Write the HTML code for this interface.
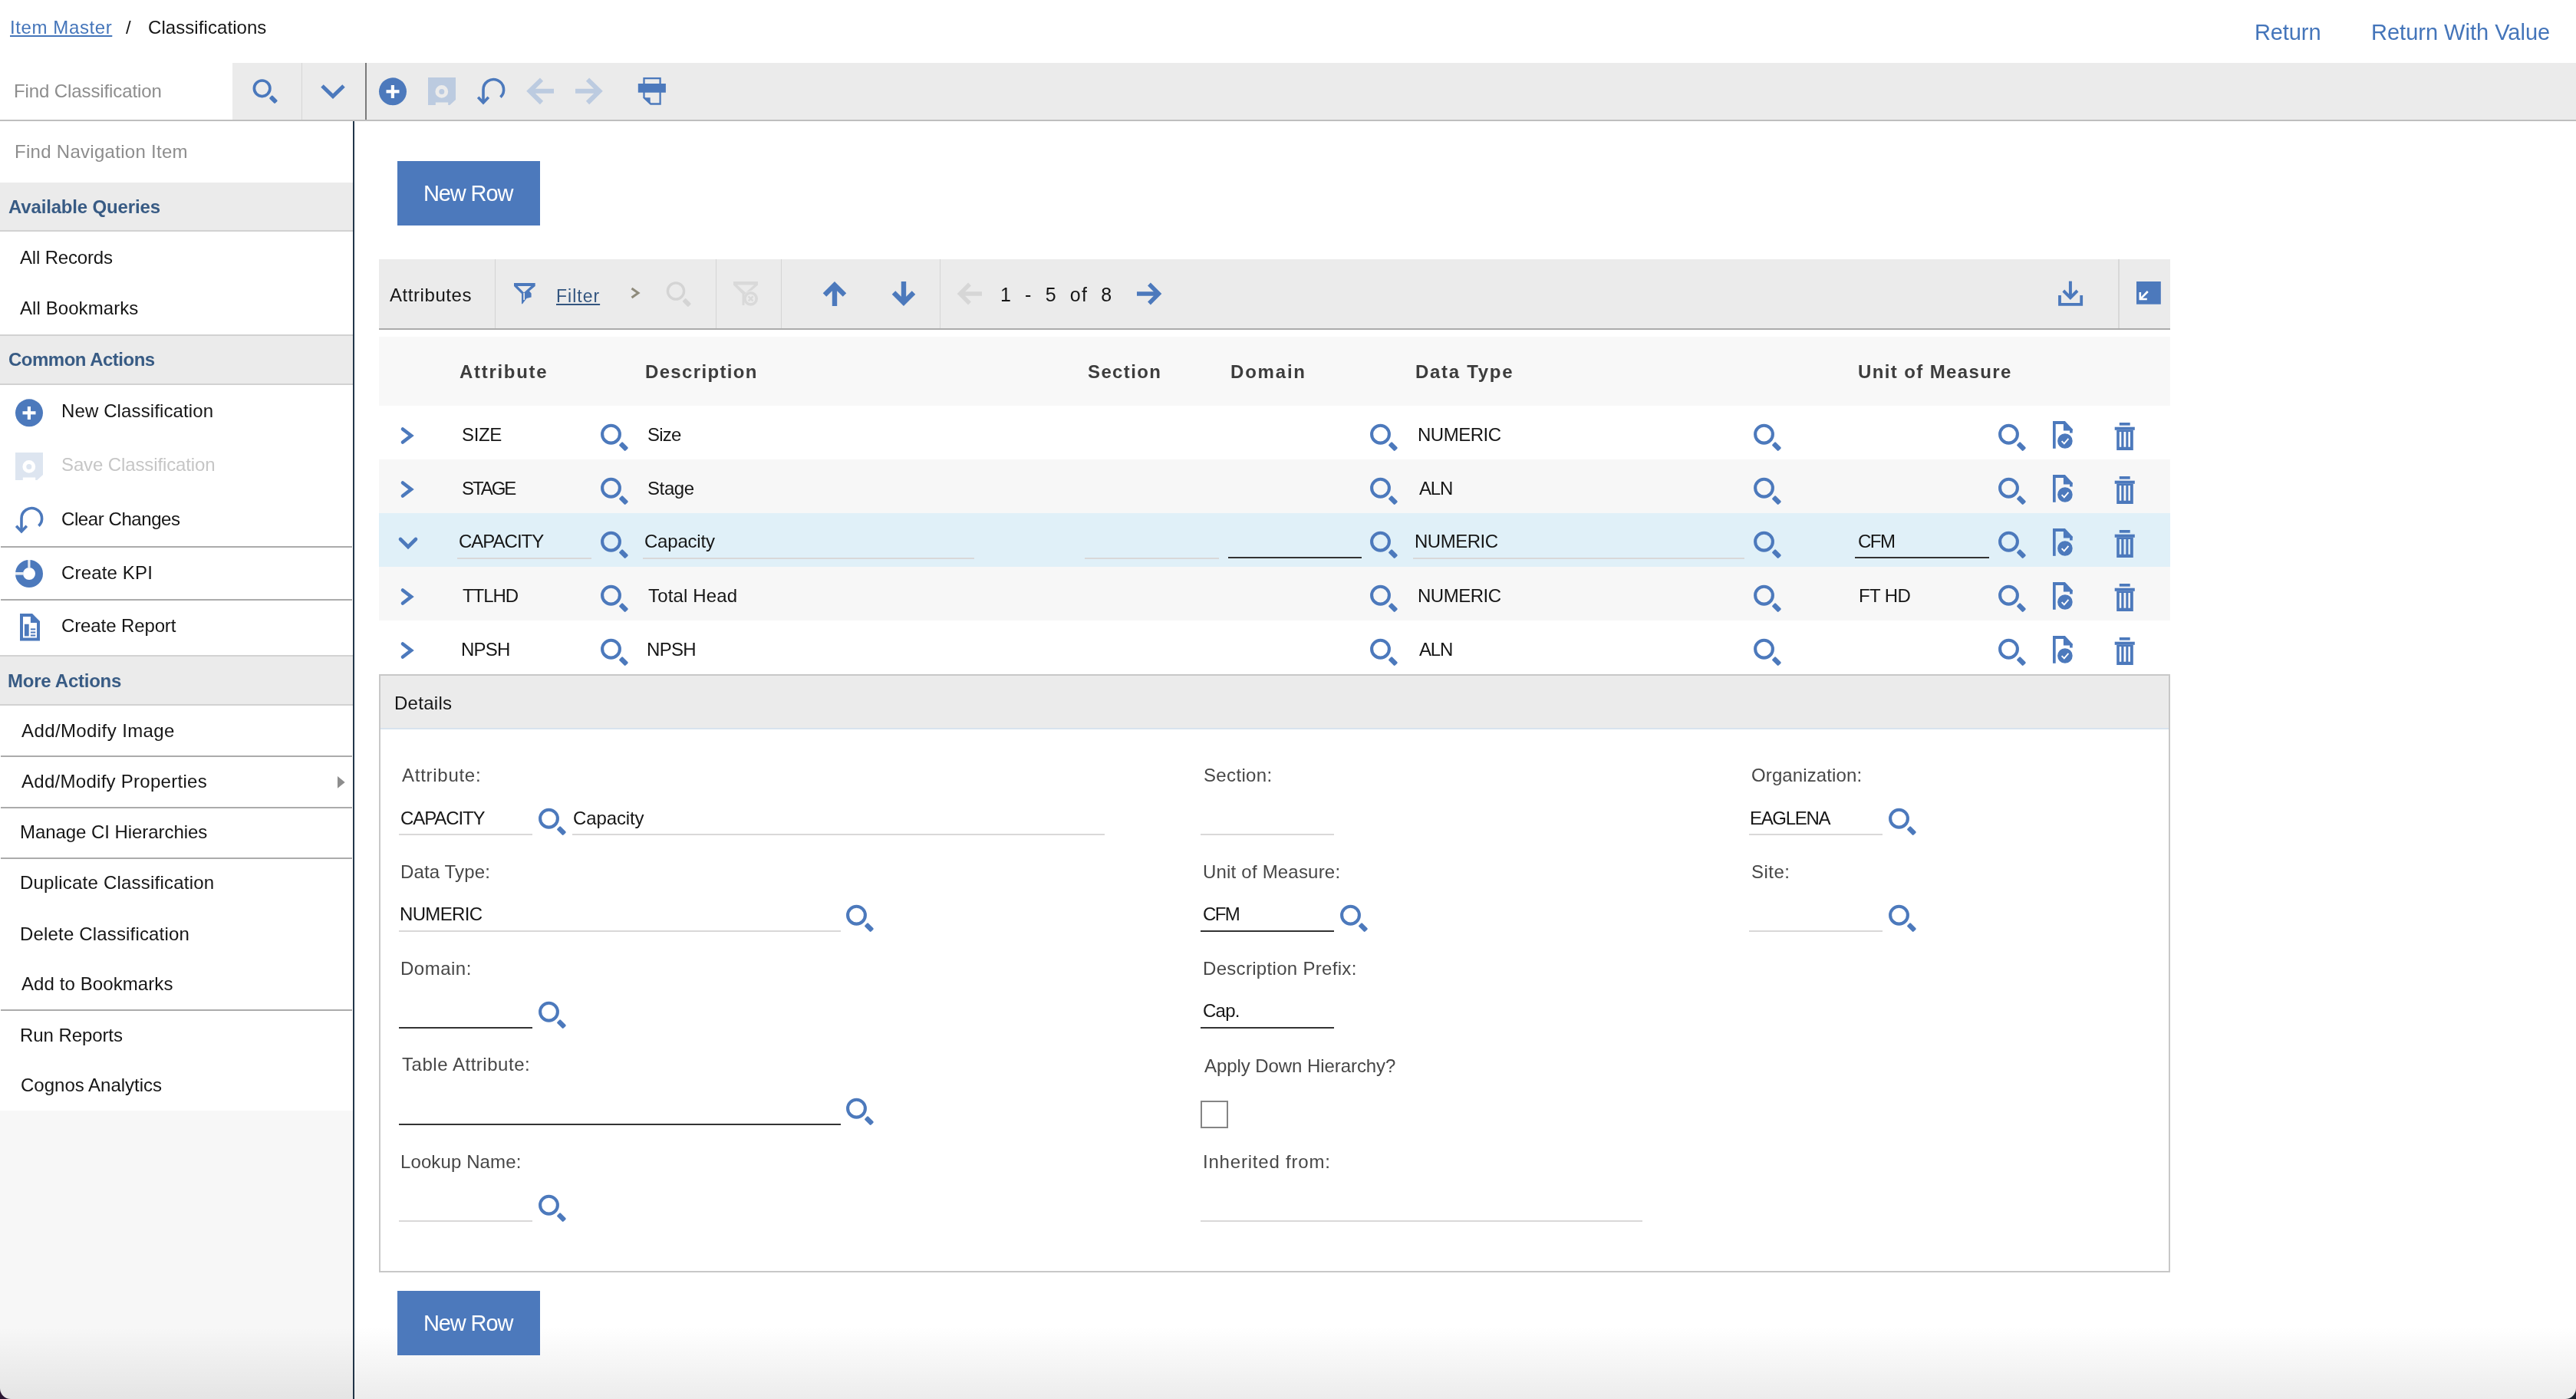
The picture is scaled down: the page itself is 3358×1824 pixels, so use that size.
<!DOCTYPE html>
<html><head><meta charset="utf-8"><title>Classifications</title>
<style>
html,body{margin:0;padding:0;width:3358px;height:1824px;overflow:hidden;background:#fff;}
body{position:relative;font-family:"Liberation Sans",sans-serif;}
.r{position:absolute;box-sizing:content-box;}
.i{position:absolute;overflow:visible;}
.t{position:absolute;line-height:40px;white-space:nowrap;font-family:"Liberation Sans",sans-serif;will-change:transform;}
</style></head><body>
<svg width="0" height="0" style="position:absolute">
<defs>
<g id="mag"><circle cx="13.5" cy="14.2" r="11.4" fill="none" stroke="currentColor" stroke-width="4.1"/><rect x="24.15" y="27" width="11.5" height="6.4" rx="1.3" fill="currentColor" transform="rotate(45 29.9 30.2)"/></g>
<g id="magd"><circle cx="13" cy="13.5" r="10.6" fill="none" stroke="currentColor" stroke-width="3.4"/><rect x="22" y="25.5" width="10.5" height="6" rx="1.2" fill="currentColor" transform="rotate(45 27.25 28.5)"/></g>
<g id="plusc"><circle cx="18" cy="18.3" r="18" fill="currentColor"/><rect x="9.5" y="16.2" width="17" height="4.2" fill="#fff"/><rect x="15.8" y="10" width="4.2" height="17" fill="#fff"/></g>
<g id="save"><path fill="currentColor" fill-rule="evenodd" d="M0 0 H36 V29 L28.3 36 H26.2 V32.5 H9.8 V36 H0 Z M26.2 18.4 A8.4 8.4 0 1 0 9.4 18.4 A8.4 8.4 0 1 0 26.2 18.4 Z M21.3 18.4 A3.5 3.5 0 1 1 14.3 18.4 A3.5 3.5 0 1 1 21.3 18.4 Z"/></g>
<g id="undo"><path d="M32.4 26.6 A13.3 13.3 0 1 0 10 17 V32" fill="none" stroke="currentColor" stroke-width="3.6"/><polyline points="3.2,26.8 10,34 16.8,26.8" fill="none" stroke="currentColor" stroke-width="3.6" stroke-linejoin="miter"/></g>
<g id="undo2"><path d="M32.4 25.6 A13.3 13.3 0 1 0 10 16 V31" fill="none" stroke="currentColor" stroke-width="3.6"/><polyline points="3.2,25.8 10,33 16.8,25.8" fill="none" stroke="currentColor" stroke-width="3.6"/></g>
<g id="arrL"><path d="M37 18.8 H6 M21 3.6 L5.5 18.8 L21 34" fill="none" stroke="currentColor" stroke-width="6" stroke-linejoin="miter"/></g>
<g id="arrR"><path d="M1 18.8 H32 M17 3.6 L32.5 18.8 L17 34" fill="none" stroke="currentColor" stroke-width="6" stroke-linejoin="miter"/></g>
<g id="arrS"><path d="M2 18 H30 M18 5.5 L30.5 18 L18 30.5" fill="none" stroke="currentColor" stroke-width="5.4" stroke-linejoin="miter"/></g>
<g id="printer"><rect x="9.5" y="2.1" width="21.1" height="10" fill="none" stroke="currentColor" stroke-width="2.3"/><rect x="1.8" y="9" width="36.1" height="11.7" fill="currentColor"/><path d="M9.5 20 V27.3 L18.4 35.5 H30.6 V20" fill="none" stroke="currentColor" stroke-width="2.3"/><polygon points="8.4,27.3 17.7,27.3 17.7,36.6" fill="currentColor"/></g>
<g id="kpi"><circle cx="18" cy="18" r="13" fill="none" stroke="currentColor" stroke-width="10"/><rect x="16.3" y="0" width="3.2" height="10.5" fill="#e6ebf2"/><rect x="0" y="16" width="10.5" height="3.6" fill="#e6ebf2"/></g>
<g id="report"><path d="M2 2 H15 L24 11 V33.6 H2 Z" fill="none" stroke="currentColor" stroke-width="4"/><polygon points="13.9,0 15.8,0 26,10.2 26,12 13.9,12" fill="currentColor"/><rect x="5.9" y="13.75" width="5.8" height="15.65" fill="currentColor"/><rect x="13.9" y="19.4" width="6.3" height="2" fill="currentColor"/><rect x="13.9" y="23.5" width="6.3" height="2" fill="currentColor"/><rect x="13.9" y="27.5" width="6.3" height="2" fill="currentColor"/></g>
<g id="filter"><path fill="currentColor" fill-rule="evenodd" d="M6 6.9 H33.7 V11 L26 17.6 L28.6 20.6 V25.6 L22.5 27 L17 34.3 H16 V21.1 L6 11 Z M10.6 11 H28.3 L19 19.4 Z M18.3 20 H20 V29 H18.3 Z"/></g>
<g id="filterx"><path fill="currentColor" fill-rule="evenodd" d="M6 4.9 H38 V9.4 L30 16.5 L24 18.5 L20.5 22 V36 H17.5 V21 L6 9.4 Z M11 9.4 H33 L22 19.5 Z"/><circle cx="28.6" cy="27.4" r="7.6" fill="none" stroke="currentColor" stroke-width="3.6"/><path d="M25.6 24.4 L31.6 30.4 M31.6 24.4 L25.6 30.4" stroke="currentColor" stroke-width="2.4"/></g>
<g id="up"><path d="M18 34 V8 M5 19.5 L18 6.6 L31 19.5" fill="none" stroke="currentColor" stroke-width="6.4" stroke-linejoin="miter"/></g>
<g id="down"><path d="M18 2 V28 M5 16.5 L18 29.4 L31 16.5" fill="none" stroke="currentColor" stroke-width="6.4" stroke-linejoin="miter"/></g>
<g id="download"><path d="M18.9 2.6 V23" fill="none" stroke="currentColor" stroke-width="4"/><polyline points="9.8,15 18.9,24.2 28,15" fill="none" stroke="currentColor" stroke-width="4"/><path d="M5 21 V32.8 H33.2 V21" fill="none" stroke="currentColor" stroke-width="3.8"/></g>
<g id="collapse"><rect x="1" y="1" width="31.8" height="29.7" fill="currentColor"/><path d="M15.8 14 L6.3 23.6 M5.8 15 V24 H14.8" fill="none" stroke="#fff" stroke-width="2.6"/></g>
<g id="doccheck"><rect x="2" y="2" width="3.7" height="35.8" fill="currentColor"/><rect x="2" y="2" width="14" height="4" fill="currentColor"/><polygon points="15.9,2 17.9,2 27.7,12.4 27.7,14.4 15.9,14.4" fill="currentColor"/><rect x="24" y="12.5" width="3.7" height="5" fill="currentColor"/><circle cx="17.9" cy="28" r="9.8" fill="currentColor"/><polyline points="13.6,28.2 16.8,31.4 22.4,24.8" fill="none" stroke="#fff" stroke-width="1.9"/></g>
<g id="trash"><rect x="8.8" y="3" width="13.9" height="3.7" fill="currentColor"/><rect x="2.7" y="8.7" width="26.1" height="4.1" fill="currentColor"/><path fill="currentColor" fill-rule="evenodd" d="M5.2 12.8 H26.8 V38.9 H5.2 Z M8.8 15 V34.8 H11.3 V15 Z M14.5 15 V34.8 H17.3 V15 Z M20.4 15 V34.8 H22.9 V15 Z"/></g>
</defs></svg>
<div class=r style="left:303px;top:82px;width:3055px;height:74px;background:#ebebeb;"></div><div class=r style="left:0px;top:156px;width:3358px;height:2px;background:#bebebe;"></div><div class=r style="left:393px;top:82px;width:1px;height:74px;background:#d6d6d6;"></div><div class=r style="left:476px;top:82px;width:2px;height:74px;background:#7a7a7a;"></div><svg class=i style="left:328px;top:101px;width:37px;height:37px;" viewBox="0 0 37 37"><g transform="translate(1.5 1.5) scale(0.9)" style="color:#4a78bc"><use href="#mag"/></g></svg><svg class=i style="left:415px;top:106px;width:38px;height:26px;" viewBox="0 0 38 26"><polyline points="5,6 19,19.5 33,6" fill="none" stroke="#4c79bc" stroke-width="5" stroke-linecap="butt"/></svg><svg class=i style="left:494px;top:100.5px;width:36px;height:36px;color:#4c79bc;" viewBox="0 0 36 36"><use href="#plusc"/></svg><svg class=i style="left:558px;top:100.5px;width:36px;height:36px;color:#bccbe0;" viewBox="0 0 36 36"><use href="#save"/></svg><svg class=i style="left:620px;top:100px;width:40px;height:38px;color:#4c79bc;" viewBox="0 0 40 38"><use href="#undo"/></svg><svg class=i style="left:685px;top:100px;width:38px;height:37px;color:#bccbe0;" viewBox="0 0 38 37"><use href="#arrL"/></svg><svg class=i style="left:749px;top:100px;width:38px;height:37px;color:#bccbe0;" viewBox="0 0 38 37"><use href="#arrR"/></svg><svg class=i style="left:830px;top:100px;width:40px;height:38px;color:#4c79bc;" viewBox="0 0 40 38"><use href="#printer"/></svg><div class=r style="left:460px;top:158px;width:2px;height:1666px;background:#22364a;"></div><div class=r style="left:0px;top:1448px;width:460px;height:376px;background:#f7f7f7;"></div><div class=r style="left:0;top:1730px;width:3358px;height:94px;background:linear-gradient(to bottom, rgba(0,0,0,0), rgba(0,0,0,0.075));"></div><div class=r style="left:0px;top:238px;width:460px;height:62px;background:#ebebeb;"></div><div class=r style="left:0px;top:300px;width:460px;height:2px;background:#d2d2d2;"></div><div class=r style="left:0px;top:438px;width:460px;height:62px;background:#ebebeb;"></div><div class=r style="left:0px;top:500px;width:460px;height:2px;background:#d2d2d2;"></div><div class=r style="left:0px;top:856px;width:460px;height:62px;background:#ebebeb;"></div><div class=r style="left:0px;top:918px;width:460px;height:2px;background:#d2d2d2;"></div><div class=r style="left:0px;top:436px;width:460px;height:2px;background:#d2d2d2;"></div><div class=r style="left:0px;top:854px;width:460px;height:2px;background:#d2d2d2;"></div><div class=r style="left:1px;top:712px;width:458px;height:2px;background:#ababab;"></div><div class=r style="left:1px;top:781px;width:458px;height:2px;background:#ababab;"></div><div class=r style="left:1px;top:985px;width:458px;height:2px;background:#ababab;"></div><div class=r style="left:1px;top:1052px;width:458px;height:2px;background:#ababab;"></div><div class=r style="left:1px;top:1118px;width:458px;height:2px;background:#ababab;"></div><div class=r style="left:1px;top:1316px;width:458px;height:2px;background:#ababab;"></div><svg class=i style="left:20px;top:519.5px;width:36px;height:36px;color:#4c79bc;" viewBox="0 0 36 36"><use href="#plusc"/></svg><svg class=i style="left:20px;top:589.5px;width:36px;height:36px;color:#dde5f0;" viewBox="0 0 36 36"><use href="#save"/></svg><svg class=i style="left:18px;top:660px;width:40px;height:36px;color:#4c79bc;" viewBox="0 0 40 36"><use href="#undo2"/></svg><svg class=i style="left:20px;top:730px;width:36px;height:36px;color:#4c79bc;" viewBox="0 0 36 36"><use href="#kpi"/></svg><svg class=i style="left:26px;top:800px;width:26px;height:36px;color:#4c79bc;" viewBox="0 0 26 36"><use href="#report"/></svg><svg class=i style="left:440px;top:1012px;width:10px;height:16px;" viewBox="0 0 10 16"><polygon points="0,0 9.6,7.9 0,15.7" fill="#8d8d8d"/></svg><div class=r style="left:518px;top:210px;width:186px;height:84px;background:#4c79bc;"></div><div class=r style="left:518px;top:1683px;width:186px;height:84px;background:#4c79bc;"></div><div class=r style="left:494px;top:338px;width:2335px;height:90px;background:#ebebeb;"></div><div class=r style="left:494px;top:428px;width:2335px;height:2px;background:#ababab;"></div><div class=r style="left:645px;top:338px;width:1px;height:90px;background:#d4d4d4;"></div><div class=r style="left:933px;top:338px;width:1px;height:90px;background:#d4d4d4;"></div><div class=r style="left:1018px;top:338px;width:1px;height:90px;background:#d4d4d4;"></div><div class=r style="left:1225px;top:338px;width:1px;height:90px;background:#d4d4d4;"></div><div class=r style="left:2761px;top:338px;width:2px;height:90px;background:#d8d8d8;"></div><svg class=i style="left:664px;top:362px;width:40px;height:40px;color:#4c79bc;" viewBox="0 0 40 40"><use href="#filter"/></svg><svg class=i style="left:820px;top:373px;width:16px;height:18px;" viewBox="0 0 16 18"><polyline points="3.5,3 12,9 3.5,15" fill="none" stroke="#8f8b7c" stroke-width="3"/></svg><svg class=i style="left:868px;top:366px;width:35px;height:35px;color:#d4d4d4;" viewBox="0 0 35 35"><use href="#magd"/></svg><svg class=i style="left:950px;top:362px;width:44px;height:40px;color:#d9d9d9;" viewBox="0 0 44 40"><use href="#filterx"/></svg><svg class=i style="left:1070px;top:365px;width:36px;height:36px;color:#4c79bc;" viewBox="0 0 36 36"><use href="#up"/></svg><svg class=i style="left:1160px;top:365px;width:36px;height:36px;color:#4c79bc;" viewBox="0 0 36 36"><use href="#down"/></svg><svg class=i style="left:1246px;top:365px;width:36px;height:36px;color:#d6d6d6;transform:scaleX(-1);" viewBox="0 0 36 36"><use href="#arrS"/></svg><svg class=i style="left:1480px;top:365px;width:36px;height:36px;color:#4c79bc;" viewBox="0 0 36 36"><use href="#arrS"/></svg><svg class=i style="left:2680px;top:364px;width:38px;height:38px;color:#4c79bc;" viewBox="0 0 38 38"><use href="#download"/></svg><svg class=i style="left:2784px;top:366px;width:34px;height:32px;color:#4c79bc;" viewBox="0 0 34 32"><use href="#collapse"/></svg><div class=r style="left:494px;top:439px;width:2335px;height:90px;background:#f8f8f8;"></div><div class=r style="left:494px;top:529px;width:2335px;height:70px;background:#ffffff;"></div><div class=r style="left:494px;top:599px;width:2335px;height:70px;background:#f7f7f7;"></div><div class=r style="left:494px;top:669px;width:2335px;height:70px;background:#e0f0f8;"></div><div class=r style="left:494px;top:739px;width:2335px;height:70px;background:#f7f7f7;"></div><div class=r style="left:494px;top:809px;width:2335px;height:70px;background:#ffffff;"></div><svg class=i style="left:521px;top:556px;width:22px;height:26px;" viewBox="0 0 22 26"><polyline points="4,3.5 15,12 4,20.5" fill="none" stroke="#4c79bc" stroke-width="4.6" stroke-linecap="round"/></svg><svg class=i style="left:782.5px;top:552px;width:37px;height:37px;color:#4c79bc;" viewBox="0 0 37 37"><use href="#mag"/></svg><svg class=i style="left:1786px;top:552px;width:37px;height:37px;color:#4c79bc;" viewBox="0 0 37 37"><use href="#mag"/></svg><svg class=i style="left:2285.5px;top:552px;width:37px;height:37px;color:#4c79bc;" viewBox="0 0 37 37"><use href="#mag"/></svg><svg class=i style="left:2604.5px;top:552px;width:37px;height:37px;color:#4c79bc;" viewBox="0 0 37 37"><use href="#mag"/></svg><svg class=i style="left:2674px;top:547px;width:30px;height:40px;color:#4c79bc;" viewBox="0 0 30 40"><use href="#doccheck"/></svg><svg class=i style="left:2754px;top:548px;width:32px;height:40px;color:#4c79bc;" viewBox="0 0 32 40"><use href="#trash"/></svg><svg class=i style="left:521px;top:626px;width:22px;height:26px;" viewBox="0 0 22 26"><polyline points="4,3.5 15,12 4,20.5" fill="none" stroke="#4c79bc" stroke-width="4.6" stroke-linecap="round"/></svg><svg class=i style="left:782.5px;top:622px;width:37px;height:37px;color:#4c79bc;" viewBox="0 0 37 37"><use href="#mag"/></svg><svg class=i style="left:1786px;top:622px;width:37px;height:37px;color:#4c79bc;" viewBox="0 0 37 37"><use href="#mag"/></svg><svg class=i style="left:2285.5px;top:622px;width:37px;height:37px;color:#4c79bc;" viewBox="0 0 37 37"><use href="#mag"/></svg><svg class=i style="left:2604.5px;top:622px;width:37px;height:37px;color:#4c79bc;" viewBox="0 0 37 37"><use href="#mag"/></svg><svg class=i style="left:2674px;top:617px;width:30px;height:40px;color:#4c79bc;" viewBox="0 0 30 40"><use href="#doccheck"/></svg><svg class=i style="left:2754px;top:618px;width:32px;height:40px;color:#4c79bc;" viewBox="0 0 32 40"><use href="#trash"/></svg><svg class=i style="left:518px;top:699px;width:28px;height:20px;" viewBox="0 0 28 20"><polyline points="4,4 14,14 24,4" fill="none" stroke="#4c79bc" stroke-width="4.6" stroke-linecap="round"/></svg><svg class=i style="left:782.5px;top:692px;width:37px;height:37px;color:#4c79bc;" viewBox="0 0 37 37"><use href="#mag"/></svg><svg class=i style="left:1786px;top:692px;width:37px;height:37px;color:#4c79bc;" viewBox="0 0 37 37"><use href="#mag"/></svg><svg class=i style="left:2285.5px;top:692px;width:37px;height:37px;color:#4c79bc;" viewBox="0 0 37 37"><use href="#mag"/></svg><svg class=i style="left:2604.5px;top:692px;width:37px;height:37px;color:#4c79bc;" viewBox="0 0 37 37"><use href="#mag"/></svg><svg class=i style="left:2674px;top:687px;width:30px;height:40px;color:#4c79bc;" viewBox="0 0 30 40"><use href="#doccheck"/></svg><svg class=i style="left:2754px;top:688px;width:32px;height:40px;color:#4c79bc;" viewBox="0 0 32 40"><use href="#trash"/></svg><svg class=i style="left:521px;top:766px;width:22px;height:26px;" viewBox="0 0 22 26"><polyline points="4,3.5 15,12 4,20.5" fill="none" stroke="#4c79bc" stroke-width="4.6" stroke-linecap="round"/></svg><svg class=i style="left:782.5px;top:762px;width:37px;height:37px;color:#4c79bc;" viewBox="0 0 37 37"><use href="#mag"/></svg><svg class=i style="left:1786px;top:762px;width:37px;height:37px;color:#4c79bc;" viewBox="0 0 37 37"><use href="#mag"/></svg><svg class=i style="left:2285.5px;top:762px;width:37px;height:37px;color:#4c79bc;" viewBox="0 0 37 37"><use href="#mag"/></svg><svg class=i style="left:2604.5px;top:762px;width:37px;height:37px;color:#4c79bc;" viewBox="0 0 37 37"><use href="#mag"/></svg><svg class=i style="left:2674px;top:757px;width:30px;height:40px;color:#4c79bc;" viewBox="0 0 30 40"><use href="#doccheck"/></svg><svg class=i style="left:2754px;top:758px;width:32px;height:40px;color:#4c79bc;" viewBox="0 0 32 40"><use href="#trash"/></svg><svg class=i style="left:521px;top:836px;width:22px;height:26px;" viewBox="0 0 22 26"><polyline points="4,3.5 15,12 4,20.5" fill="none" stroke="#4c79bc" stroke-width="4.6" stroke-linecap="round"/></svg><svg class=i style="left:782.5px;top:832px;width:37px;height:37px;color:#4c79bc;" viewBox="0 0 37 37"><use href="#mag"/></svg><svg class=i style="left:1786px;top:832px;width:37px;height:37px;color:#4c79bc;" viewBox="0 0 37 37"><use href="#mag"/></svg><svg class=i style="left:2285.5px;top:832px;width:37px;height:37px;color:#4c79bc;" viewBox="0 0 37 37"><use href="#mag"/></svg><svg class=i style="left:2604.5px;top:832px;width:37px;height:37px;color:#4c79bc;" viewBox="0 0 37 37"><use href="#mag"/></svg><svg class=i style="left:2674px;top:827px;width:30px;height:40px;color:#4c79bc;" viewBox="0 0 30 40"><use href="#doccheck"/></svg><svg class=i style="left:2754px;top:828px;width:32px;height:40px;color:#4c79bc;" viewBox="0 0 32 40"><use href="#trash"/></svg><div class=r style="left:596px;top:727px;width:175px;height:2px;background:#d9d8d8;"></div><div class=r style="left:838px;top:727px;width:432px;height:2px;background:#d9d8d8;"></div><div class=r style="left:1414px;top:727px;width:175px;height:2px;background:#d9d8d8;"></div><div class=r style="left:1601px;top:726px;width:174px;height:2px;background:#333333;"></div><div class=r style="left:1842px;top:727px;width:432px;height:2px;background:#d9d8d8;"></div><div class=r style="left:2418px;top:726px;width:175px;height:2px;background:#333333;"></div><div class=r style="left:494px;top:879px;width:2331px;height:776px;border:2px solid #c8c8c8;background:#fff"></div><div class=r style="left:496px;top:881px;width:2331px;height:68px;background:#ebebeb;"></div><div class=r style="left:496px;top:949px;width:2331px;height:2px;background:#d8e3ee;"></div><div class=r style="left:520px;top:1087px;width:174px;height:2px;background:#d9d8d8;"></div><svg class=i style="left:701.5px;top:1052.5px;width:37px;height:37px;color:#4c79bc;" viewBox="0 0 37 37"><use href="#mag"/></svg><div class=r style="left:746px;top:1087px;width:694px;height:2px;background:#d9d8d8;"></div><div class=r style="left:520px;top:1213px;width:576px;height:2px;background:#d9d8d8;"></div><svg class=i style="left:1103px;top:1179px;width:37px;height:37px;color:#4c79bc;" viewBox="0 0 37 37"><use href="#mag"/></svg><div class=r style="left:520px;top:1339px;width:174px;height:2px;background:#333333;"></div><svg class=i style="left:701.5px;top:1305px;width:37px;height:37px;color:#4c79bc;" viewBox="0 0 37 37"><use href="#mag"/></svg><div class=r style="left:520px;top:1465px;width:576px;height:2px;background:#333333;"></div><svg class=i style="left:1103px;top:1431px;width:37px;height:37px;color:#4c79bc;" viewBox="0 0 37 37"><use href="#mag"/></svg><div class=r style="left:520px;top:1591px;width:174px;height:2px;background:#d9d8d8;"></div><svg class=i style="left:701.5px;top:1557px;width:37px;height:37px;color:#4c79bc;" viewBox="0 0 37 37"><use href="#mag"/></svg><div class=r style="left:1565px;top:1087px;width:174px;height:2px;background:#d9d8d8;"></div><div class=r style="left:1565px;top:1213px;width:174px;height:2px;background:#333333;"></div><svg class=i style="left:1746.5px;top:1178.5px;width:37px;height:37px;color:#4c79bc;" viewBox="0 0 37 37"><use href="#mag"/></svg><div class=r style="left:1565px;top:1339px;width:174px;height:2px;background:#333333;"></div><div class=r style="left:1565px;top:1435px;width:32px;height:32px;border:2px solid #858585;background:#fff"></div><div class=r style="left:1565px;top:1591px;width:576px;height:2px;background:#d9d8d8;"></div><div class=r style="left:2280px;top:1087px;width:174px;height:2px;background:#d9d8d8;"></div><svg class=i style="left:2462px;top:1052.5px;width:37px;height:37px;color:#4c79bc;" viewBox="0 0 37 37"><use href="#mag"/></svg><div class=r style="left:2280px;top:1213px;width:174px;height:2px;background:#d9d8d8;"></div><svg class=i style="left:2462px;top:1178.5px;width:37px;height:37px;color:#4c79bc;" viewBox="0 0 37 37"><use href="#mag"/></svg><svg class=i style="left:0px;top:1810px;width:14px;height:14px;" viewBox="0 0 14 14"><path d="M0 0 A14 14 0 0 0 14 14 H0 Z" fill="#2b1733"/></svg><svg class=i style="left:3344px;top:1810px;width:14px;height:14px;" viewBox="0 0 14 14"><path d="M14 0 A14 14 0 0 1 0 14 H14 Z" fill="#1e2430"/></svg>
<div class=t style="left:12.6px;top:16.0px;font-size:24px;color:#4475ba;letter-spacing:0.60px;text-decoration:underline;text-decoration-thickness:2px;text-underline-offset:2px;">Item Master</div><div class=t style="left:164.0px;top:15.7px;font-size:24px;color:#161616;">/</div><div class=t style="left:193.0px;top:15.7px;font-size:24px;color:#161616;letter-spacing:0.07px;">Classifications</div><div class=t style="left:2938.5px;top:21.8px;font-size:29px;color:#4475ba;letter-spacing:-0.10px;">Return</div><div class=t style="left:3091.0px;top:21.8px;font-size:29px;color:#4475ba;">Return With Value</div><div class=t style="left:18.4px;top:98.7px;font-size:24px;color:#8d8d8d;letter-spacing:-0.11px;">Find Classification</div><div class=t style="left:19.0px;top:178.4px;font-size:24px;color:#8d8d8d;letter-spacing:0.29px;">Find Navigation Item</div><div class=t style="left:11.3px;top:250.0px;font-size:24px;color:#385b84;font-weight:700;letter-spacing:-0.16px;">Available Queries</div><div class=t style="left:26.4px;top:316.1px;font-size:24px;color:#161616;letter-spacing:-0.17px;">All Records</div><div class=t style="left:26.4px;top:382.1px;font-size:24px;color:#161616;letter-spacing:0.08px;">All Bookmarks</div><div class=t style="left:11.3px;top:449.3px;font-size:24px;color:#385b84;font-weight:700;letter-spacing:-0.51px;">Common Actions</div><div class=t style="left:79.8px;top:516.2px;font-size:24px;color:#161616;letter-spacing:0.12px;">New Classification</div><div class=t style="left:80.0px;top:586.1px;font-size:24px;color:#c6c6c6;letter-spacing:-0.12px;">Save Classification</div><div class=t style="left:80.0px;top:656.5px;font-size:24px;color:#161616;letter-spacing:-0.42px;">Clear Changes</div><div class=t style="left:80.0px;top:726.5px;font-size:24px;color:#161616;letter-spacing:0.16px;">Create KPI</div><div class=t style="left:80.0px;top:796.2px;font-size:24px;color:#161616;letter-spacing:-0.11px;">Create Report</div><div class=t style="left:10.3px;top:867.7px;font-size:24px;color:#385b84;font-weight:700;letter-spacing:-0.25px;">More Actions</div><div class=t style="left:27.7px;top:933.3px;font-size:24px;color:#161616;letter-spacing:0.40px;">Add/Modify Image</div><div class=t style="left:27.7px;top:998.9px;font-size:24px;color:#161616;letter-spacing:0.28px;">Add/Modify Properties</div><div class=t style="left:25.7px;top:1065.0px;font-size:24px;color:#161616;letter-spacing:-0.06px;">Manage CI Hierarchies</div><div class=t style="left:25.7px;top:1130.7px;font-size:24px;color:#161616;letter-spacing:0.22px;">Duplicate Classification</div><div class=t style="left:25.7px;top:1197.5px;font-size:24px;color:#161616;letter-spacing:0.17px;">Delete Classification</div><div class=t style="left:27.7px;top:1262.7px;font-size:24px;color:#161616;letter-spacing:0.09px;">Add to Bookmarks</div><div class=t style="left:25.7px;top:1329.5px;font-size:24px;color:#161616;letter-spacing:-0.08px;">Run Reports</div><div class=t style="left:26.7px;top:1395.1px;font-size:24px;color:#161616;">Cognos Analytics</div><div class=t style="left:551.9px;top:231.5px;font-size:29px;color:#ffffff;letter-spacing:-1.12px;">New Row</div><div class=t style="left:551.9px;top:1705.0px;font-size:29px;color:#ffffff;letter-spacing:-1.12px;">New Row</div><div class=t style="left:508.4px;top:364.9px;font-size:24px;color:#161616;letter-spacing:0.56px;">Attributes</div><div class=t style="left:724.7px;top:365.7px;font-size:23px;color:#33557f;letter-spacing:1.00px;text-decoration:underline;text-decoration-thickness:2px;text-underline-offset:2px;">Filter</div><div class=t style="left:1304.0px;top:364.3px;font-size:25px;color:#161616;letter-spacing:1.44px;">1&nbsp;&nbsp;-&nbsp;&nbsp;5&nbsp;&nbsp;of&nbsp;&nbsp;8</div><div class=t style="left:599.3px;top:465.2px;font-size:24px;color:#3d3d3d;font-weight:700;letter-spacing:1.71px;">Attribute</div><div class=t style="left:841.0px;top:465.2px;font-size:24px;color:#3d3d3d;font-weight:700;letter-spacing:1.34px;">Description</div><div class=t style="left:1417.7px;top:465.2px;font-size:24px;color:#3d3d3d;font-weight:700;letter-spacing:1.38px;">Section</div><div class=t style="left:1603.5px;top:465.2px;font-size:24px;color:#3d3d3d;font-weight:700;letter-spacing:1.80px;">Domain</div><div class=t style="left:1845.0px;top:465.2px;font-size:24px;color:#3d3d3d;font-weight:700;letter-spacing:1.70px;">Data Type</div><div class=t style="left:2422.0px;top:465.2px;font-size:24px;color:#3d3d3d;font-weight:700;letter-spacing:1.38px;">Unit of Measure</div><div class=t style="left:601.7px;top:546.6px;font-size:24px;color:#161616;letter-spacing:-0.33px;">SIZE</div><div class=t style="left:843.6px;top:546.6px;font-size:24px;color:#161616;letter-spacing:-0.80px;">Size</div><div class=t style="left:1847.7px;top:546.6px;font-size:24px;color:#161616;letter-spacing:-0.50px;">NUMERIC</div><div class=t style="left:601.7px;top:616.6px;font-size:24px;color:#161616;letter-spacing:-2.05px;">STAGE</div><div class=t style="left:843.6px;top:616.6px;font-size:24px;color:#161616;letter-spacing:-0.40px;">Stage</div><div class=t style="left:1849.7px;top:616.6px;font-size:24px;color:#161616;letter-spacing:-1.15px;">ALN</div><div class=t style="left:597.7px;top:685.9px;font-size:24px;color:#161616;letter-spacing:-1.00px;">CAPACITY</div><div class=t style="left:840.0px;top:685.9px;font-size:24px;color:#161616;letter-spacing:-0.21px;">Capacity</div><div class=t style="left:1843.7px;top:685.9px;font-size:24px;color:#161616;letter-spacing:-0.50px;">NUMERIC</div><div class=t style="left:2422.0px;top:685.9px;font-size:24px;color:#161616;letter-spacing:-1.50px;">CFM</div><div class=t style="left:602.7px;top:756.6px;font-size:24px;color:#161616;letter-spacing:-1.07px;">TTLHD</div><div class=t style="left:844.6px;top:756.6px;font-size:24px;color:#161616;letter-spacing:0.14px;">Total Head</div><div class=t style="left:1847.7px;top:756.6px;font-size:24px;color:#161616;letter-spacing:-0.50px;">NUMERIC</div><div class=t style="left:2422.7px;top:756.6px;font-size:24px;color:#161616;letter-spacing:-0.62px;">FT HD</div><div class=t style="left:600.7px;top:826.6px;font-size:24px;color:#161616;letter-spacing:-0.80px;">NPSH</div><div class=t style="left:842.6px;top:826.6px;font-size:24px;color:#161616;letter-spacing:-0.70px;">NPSH</div><div class=t style="left:1849.7px;top:826.6px;font-size:24px;color:#161616;letter-spacing:-1.15px;">ALN</div><div class=t style="left:514.0px;top:897.0px;font-size:24px;color:#161616;letter-spacing:0.28px;">Details</div><div class=t style="left:524.2px;top:991.3px;font-size:24px;color:#474747;letter-spacing:0.73px;">Attribute:</div><div class=t style="left:522.2px;top:1117.3px;font-size:24px;color:#474747;letter-spacing:0.13px;">Data Type:</div><div class=t style="left:522.2px;top:1243.1px;font-size:24px;color:#474747;letter-spacing:0.50px;">Domain:</div><div class=t style="left:524.2px;top:1368.3px;font-size:24px;color:#474747;letter-spacing:0.53px;">Table Attribute:</div><div class=t style="left:522.2px;top:1495.1px;font-size:24px;color:#474747;letter-spacing:0.11px;">Lookup Name:</div><div class=t style="left:1568.5px;top:991.2px;font-size:24px;color:#474747;letter-spacing:0.34px;">Section:</div><div class=t style="left:1567.5px;top:1117.0px;font-size:24px;color:#474747;letter-spacing:0.20px;">Unit of Measure:</div><div class=t style="left:1567.5px;top:1242.6px;font-size:24px;color:#474747;letter-spacing:0.31px;">Description Prefix:</div><div class=t style="left:1569.5px;top:1369.8px;font-size:24px;color:#474747;letter-spacing:-0.07px;">Apply Down Hierarchy?</div><div class=t style="left:1567.5px;top:1495.3px;font-size:24px;color:#474747;letter-spacing:0.80px;">Inherited from:</div><div class=t style="left:2283.0px;top:991.1px;font-size:24px;color:#474747;letter-spacing:0.11px;">Organization:</div><div class=t style="left:2283.0px;top:1117.4px;font-size:24px;color:#474747;letter-spacing:0.50px;">Site:</div><div class=t style="left:521.5px;top:1047.1px;font-size:24px;color:#161616;letter-spacing:-1.10px;">CAPACITY</div><div class=t style="left:747.3px;top:1047.1px;font-size:24px;color:#161616;letter-spacing:-0.11px;">Capacity</div><div class=t style="left:520.5px;top:1172.3px;font-size:24px;color:#161616;letter-spacing:-0.67px;">NUMERIC</div><div class=t style="left:1568.0px;top:1171.9px;font-size:24px;color:#161616;letter-spacing:-1.60px;">CFM</div><div class=t style="left:1568.0px;top:1298.3px;font-size:24px;color:#161616;letter-spacing:-0.73px;">Cap.</div><div class=t style="left:2281.2px;top:1046.5px;font-size:24px;color:#161616;letter-spacing:-1.33px;">EAGLENA</div>
</body></html>
